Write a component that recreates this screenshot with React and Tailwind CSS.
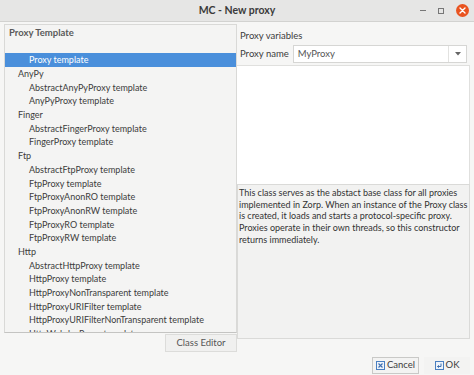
const tree = [
  { label: 'Proxy template', depth: 1, selected: true },
  { label: 'AnyPy', depth: 0 },
  { label: 'AbstractAnyPyProxy template', depth: 1 },
  { label: 'AnyPyProxy template', depth: 1 },
  { label: 'Finger', depth: 0 },
  { label: 'AbstractFingerProxy template', depth: 1 },
  { label: 'FingerProxy template', depth: 1 },
  { label: 'Ftp', depth: 0 },
  { label: 'AbstractFtpProxy template', depth: 1 },
  { label: 'FtpProxy template', depth: 1 },
  { label: 'FtpProxyAnonRO template', depth: 1 },
  { label: 'FtpProxyAnonRW template', depth: 1 },
  { label: 'FtpProxyRO template', depth: 1 },
  { label: 'FtpProxyRW template', depth: 1 },
  { label: 'Http', depth: 0 },
  { label: 'AbstractHttpProxy template', depth: 1 },
  { label: 'HttpProxy template', depth: 1 },
  { label: 'HttpProxyNonTransparent template', depth: 1 },
  { label: 'HttpProxyURIFilter template', depth: 1 },
  { label: 'HttpProxyURIFilterNonTransparent template', depth: 1 },
  { label: 'HttpWebdavProxy template', depth: 1 },
];

const description =
  'This class serves as the abstact base class for all proxies implemented in Zorp. When an instance of the Proxy class is created, it loads and starts a protocol-specific proxy. Proxies operate in their own threads, so this constructor returns immediately.';

function TitleBar() {
  return (
    <div className="flex h-[22px] shrink-0 items-center bg-[#e6e6e5] border-b border-[#d2d2d0]">
      <div className="w-[70px]" />
      <div className="flex-1 text-center text-[10.5px] font-bold text-[#3a3a3a]">MC - New proxy</div>
      <div className="flex w-[70px] items-center justify-end gap-[12px] pr-[5px]">
        <span className="block h-px w-[6px] bg-[#777]" />
        <span className="block h-[6px] w-[6px] border border-[#777]" />
        <span className="flex h-[13px] w-[13px] items-center justify-center rounded-full bg-[#e95420]">
          <svg width="7" height="7" viewBox="0 0 7 7">
            <path d="M1 1L6 6M6 1L1 6" stroke="#fff" strokeWidth="1.4" strokeLinecap="round" />
          </svg>
        </span>
      </div>
    </div>
  );
}

function TemplateList() {
  return (
    <div className="flex h-[309px] flex-col overflow-hidden border border-[#d9d9d7] border-b-[#c4c4c2] border-b-dashed bg-[#f4f4f3]">
      <div className="h-[28px] shrink-0 px-[4px] pt-[1px] text-[9.5px] font-bold text-[#5a5a5a]">Proxy Template</div>
      <div className="flex shrink-0 flex-col">
        {tree.map((item) => (
          <div
            key={item.label}
            className={
              item.selected
                ? 'flex h-[13.7px] shrink-0 items-center bg-[#4a8fdb] pl-[24px] text-[9px] leading-none text-white'
                : item.depth === 0
                ? 'flex h-[13.7px] shrink-0 items-center pl-[13px] text-[9px] leading-none text-[#3c3c3c]'
                : 'flex h-[13.7px] shrink-0 items-center pl-[24px] text-[9px] leading-none text-[#3c3c3c]'
            }
          >
            {item.label}
          </div>
        ))}
      </div>
    </div>
  );
}

function SmallIcon({ kind }) {
  return (
    <span className="flex h-[9px] w-[9px] items-center justify-center border border-[#4a7fc0] bg-[#eef3fa]">
      <svg width="7" height="7" viewBox="0 0 7 7">
        {kind === 'x' ? (
          <path d="M1.5 1.5L5.5 5.5M5.5 1.5L1.5 5.5" stroke="#3d6fb0" strokeWidth="1.1" />
        ) : (
          <path d="M5 1.5V4.5H1.5M2.8 3.3L1.5 4.5L2.8 5.7" stroke="#3d6fb0" strokeWidth="1" fill="none" />
        )}
      </svg>
    </span>
  );
}

export default function App() {
  return (
    <div
      className="flex h-[375px] w-[474px] flex-col overflow-hidden bg-[#f6f6f5] text-[#3c3c3c]"
      style={{ fontFamily: 'Lato, "Noto Sans", sans-serif' }}
    >
      <TitleBar />

      <div className="flex pl-[4px] pr-[4px] pt-[2px]">
        {/* Left column */}
        <div className="flex w-[233px] flex-col">
          <TemplateList />
          <div className="mt-[1px] flex justify-end">
            <button className="h-[18px] w-[72px] border border-[#dcdcda] bg-[#f0f0ef] text-[9.5px] text-[#555]">
              Class Editor
            </button>
          </div>
        </div>

        {/* Right column */}
        <div className="flex h-[315px] flex-1 flex-col">
          <div className="px-[3px] pt-[5px] text-[9.5px] text-[#3c3c3c]">Proxy variables</div>
          <div className="flex items-center gap-[4px] px-[3px] pt-[2px] pb-[2px]">
            <span className="text-[9.5px] text-[#3c3c3c]">Proxy name</span>
            <div className="flex h-[18px] flex-1 items-center border border-[#d6d6d4] bg-white">
              <span className="flex-1 pl-[4px] text-[9.5px] text-[#555]">MyProxy</span>
              <span className="flex h-full w-[18px] items-center justify-center border-l border-[#e2e2e0]">
                <svg width="6" height="4" viewBox="0 0 6 4">
                  <path d="M0 0H6L3 3.5Z" fill="#666" />
                </svg>
              </span>
            </div>
          </div>
          <div className="h-[119px] border-t border-r border-[#e0e0de] bg-white" />
          <div className="flex-1 border border-[#dadad8] bg-[#f2f2f1] px-[1px] pt-[2px] text-[9px] leading-[11.6px] text-[#333]">
            {description}
          </div>
        </div>
      </div>

      <div className="mt-auto flex justify-end gap-[5px] pr-[4px] pb-[1px]">
        <button className="flex h-[17px] w-[47px] items-center justify-center gap-[2px] border border-[#c9c9c7] bg-[#f3f3f2] text-[9.5px] text-[#3c3c3c]">
          <SmallIcon kind="x" />
          Cancel
        </button>
        <button className="flex h-[17px] w-[46px] items-center justify-center gap-[2px] bg-[#f3f3f2] text-[9.5px] text-[#3c3c3c]">
          <SmallIcon kind="ok" />
          OK
        </button>
      </div>
    </div>
  );
}
